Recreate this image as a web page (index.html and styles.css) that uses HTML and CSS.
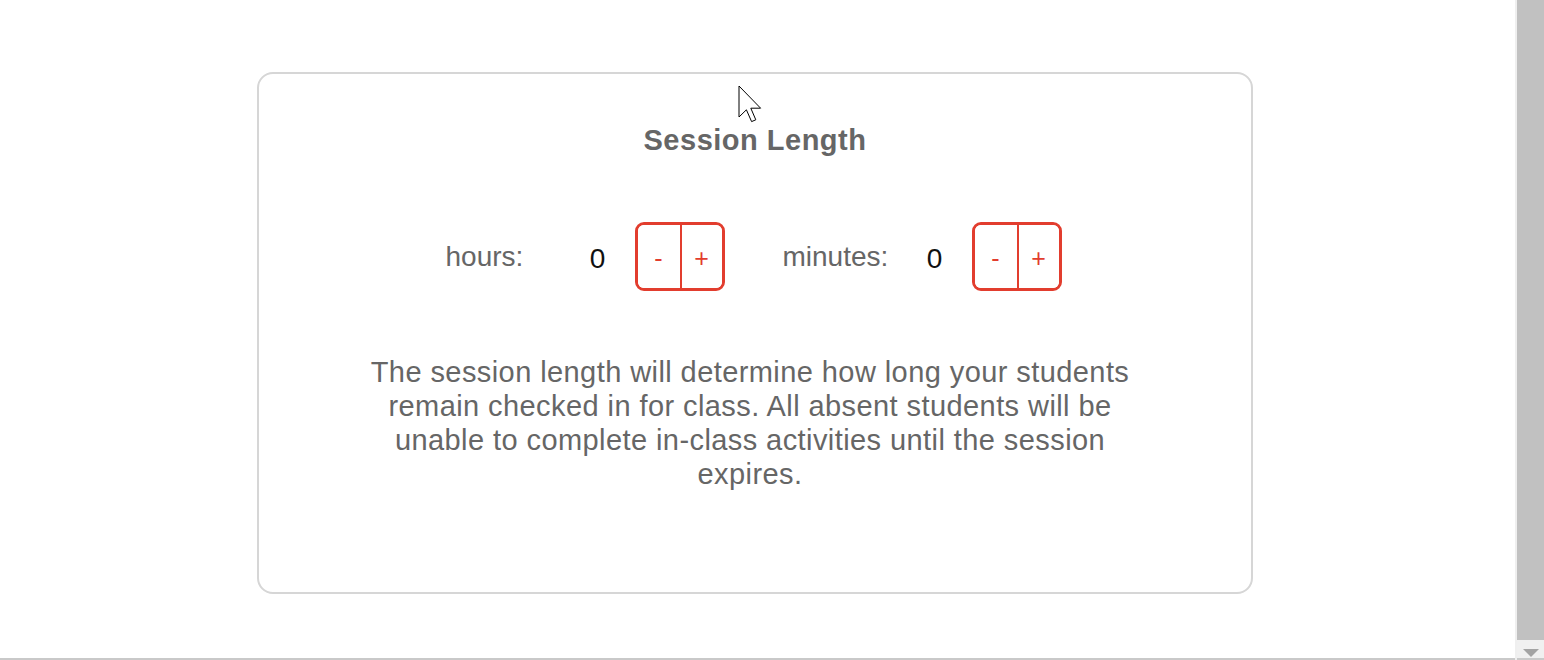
FILE: index.html
```html
<!DOCTYPE html>
<html lang="en">

<head>
  <meta charset="UTF-8">
  <title>Session Length</title>
  <link rel="stylesheet" href="styles.css">
</head>

<body>

  <div class="screen">
    <div class="page">
      <div class="viewport">

        <!-- Session card -->
        <div class="session-card">
          <h2 class="session-title">Session Length</h2>

          <div class="session-row">
            <div class="session-field">
              <span class="field-label">hours:</span>
              <span class="field-value" id="hoursValue">0</span>
              <div class="stepper">
                <button class="stepper-btn" data-target="hoursValue" data-step="-1">-</button>
                <button class="stepper-btn" data-target="hoursValue" data-step="1">+</button>
              </div>
            </div>
            <div class="session-field">
              <span class="field-label">minutes:</span>
              <span class="field-value" id="minutesValue">0</span>
              <div class="stepper">
                <button class="stepper-btn" data-target="minutesValue" data-step="-1">-</button>
                <button class="stepper-btn" data-target="minutesValue" data-step="1">+</button>
              </div>
            </div>
          </div>

          <p class="session-note">
            The session length will determine how long your students remain checked in for class. All absent students will be unable to complete in-class activities until the session expires.
          </p>
        </div>

        <!-- mouse pointer -->
        <svg class="pointer" width="24" height="38" viewBox="0 0 12 19">
          <path d="M0.5 0.5 L0.5 16 L4.2 12.4 L6.8 18.3 L8.9 17.4 L6.4 11.6 L11.3 11.6 Z" fill="#fff" stroke="#000" stroke-width="0.5" stroke-linejoin="miter"/>
        </svg>
      </div>
      <div class="hbar"></div>
    </div>

    <!-- scrollbar -->
    <div class="vscroll">
      <div class="vscroll-thumb"></div>
      <div class="vscroll-arrow"><span class="arrow-down"></span></div>
    </div>
  </div>

  <script>
    document.querySelectorAll('.stepper-btn').forEach((btn) => {
      btn.addEventListener('click', () => {
        const el = document.getElementById(btn.dataset.target);
        const max = btn.dataset.target === 'minutesValue' ? 59 : 12;
        let val = parseInt(el.textContent, 10) + parseInt(btn.dataset.step, 10);
        if (val < 0) val = 0;
        if (val > max) val = max;
        el.textContent = val;
      });
    });
  </script>

</body>

</html>
```

FILE: styles.css
```css
* {
  box-sizing: border-box;
}

body {
  margin: 0;
  font-family: "Liberation Sans", Arial, sans-serif;
  background: #fff;
}

.screen {
  display: flex;
  width: 1544px;
  height: 660px;
  overflow: hidden;
}

.page {
  flex: 1;
  display: flex;
  flex-direction: column;
}

.viewport {
  position: relative;
  flex: 1;
  padding-top: 72px;
  padding-left: 257px;
}

.hbar {
  height: 2px;
  background: #c9c9c9;
}

.vscroll {
  width: 29px;
  display: flex;
  flex-direction: column;
  border-left: 2px solid #efefef;
}

.vscroll-thumb {
  flex: 1;
  background: #c1c1c1;
}

.vscroll-arrow {
  height: 20px;
  background: #f0f0f0;
  display: flex;
  justify-content: center;
  align-items: flex-end;
  padding-bottom: 1px;
  border-bottom: 2px solid #c9c9c9;
}

.arrow-down {
  width: 0;
  height: 0;
  border-left: 8px solid transparent;
  border-right: 8px solid transparent;
  border-top: 8px solid #a3a3a3;
}

/* card */
.session-card {
  width: 996px;
  height: 522px;
  border: 2px solid #d6d6d6;
  border-radius: 16px;
  padding-top: 49px;
  text-align: center;
}

.session-title {
  margin: 0;
  font-size: 29px;
  line-height: 34px;
  font-weight: bold;
  letter-spacing: 0.5px;
  color: #666;
}

.session-row {
  display: flex;
  justify-content: center;
  gap: 58px;
  margin-top: 65px;
  padding-right: 3px;
}

.session-field {
  display: flex;
  align-items: center;
}

.field-label {
  width: 125px;
  text-align: left;
  font-size: 28px;
  color: #666;
}

.field-value {
  width: 54px;
  text-align: center;
  font-size: 28px;
  color: #111;
  padding-top: 4px;
}

.stepper {
  display: flex;
  margin-left: 10px;
  height: 69px;
  border: 3px solid #e23d2e;
  border-radius: 9px;
  overflow: hidden;
}

.stepper-btn {
  width: 42px;
  padding: 0;
  border: none;
  background: #fff;
  color: #e23d2e;
  font-family: "Liberation Sans", Arial, sans-serif;
  font-size: 25px;
  padding-top: 4px;
  cursor: pointer;
}

.stepper-btn + .stepper-btn {
  width: 42px;
  border-left: 2px solid #e23d2e;
}

.session-note {
  width: 810px;
  margin: 64px auto 0;
  padding-right: 10px;
  font-size: 29px;
  line-height: 34px;
  letter-spacing: 0.42px;
  color: #666;
}

.pointer {
  position: absolute;
  left: 738px;
  top: 85px;
}
```
